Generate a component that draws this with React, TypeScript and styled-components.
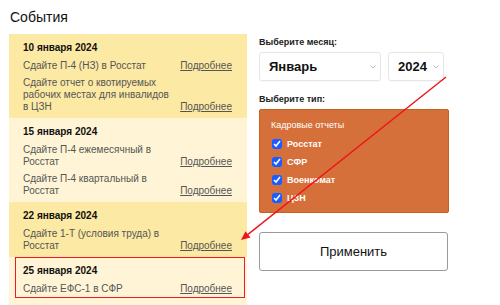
import React from "react";
import styled, { createGlobalStyle } from "styled-components";

const Global = createGlobalStyle`
  html, body { margin: 0; padding: 0; background: #fff; }
  body { font-family: "Liberation Sans", Arial, sans-serif; color: #111; }
  * { box-sizing: border-box; }
`;

const Page = styled.div`
  position: relative;
  width: 500px;
  height: 305px;
  overflow: hidden;
  display: flex;
  gap: 12px;
  padding-left: 9px;
`;

const LeftCol = styled.div`
  width: 238px;
  display: flex;
  flex-direction: column;
`;

const Title = styled.h1`
  margin: 8px 0 8px 1px;
  font-size: 14px;
  line-height: 18px;
  font-weight: 400;
  color: #111;
`;

const Group = styled.section<{ $dark?: boolean; $grow?: boolean }>`
  background: ${(p) => (p.$dark ? "#fce9a3" : "#fff5d6")};
  padding: 7px 15px 5px 14px;
  display: flex;
  flex-direction: column;
  gap: 5px;
  ${(p) => (p.$grow ? "flex: 1;" : "")}
`;

const DateLabel = styled.div`
  font-size: 10px;
  line-height: 14px;
  font-weight: 700;
  color: #111;
`;

const Item = styled.div`
  display: grid;
  grid-template-columns: 152px 1fr;
  font-size: 10px;
  line-height: 12px;
  color: #555;
`;

const Link = styled.a`
  justify-self: end;
  align-self: end;
  color: #555;
  text-decoration: underline;
  cursor: pointer;
`;

const RightCol = styled.div`
  width: 190px;
  padding-top: 36px;
  display: flex;
  flex-direction: column;
`;

const FieldLabel = styled.div<{ $top?: number }>`
  font-size: 9px;
  line-height: 12px;
  font-weight: 700;
  color: #222;
  margin-top: ${(p) => p.$top ?? 0}px;
`;

const SelectRow = styled.div`
  display: flex;
  gap: 7px;
  margin-top: 4px;
`;

const Select = styled.div<{ $w: number }>`
  width: ${(p) => p.$w}px;
  height: 29px;
  background: #fff;
  border: 1px solid #e6e6e6;
  border-radius: 3px;
  box-shadow: 0 1px 1px rgba(0, 0, 0, 0.03);
  display: flex;
  align-items: center;
  justify-content: space-between;
  padding: 0 4px 0 9px;
  font-size: 13px;
  font-weight: 700;
  color: #111;
`;

const Chevron = () => (
  <svg width="6" height="4" viewBox="0 0 6 4">
    <path d="M0.5 0.5 L3 3 L5.5 0.5" fill="none" stroke="#aaa" strokeWidth="0.8" />
  </svg>
);

const TypeBox = styled.div`
  margin-top: 4px;
  height: 104px;
  background: #d6703a;
  border: 1px solid #c8601f;
  border-radius: 2px;
  padding: 9px 11px 0;
  display: flex;
  flex-direction: column;
  color: #fff;
`;

const TypeTitle = styled.div`
  font-size: 9px;
  line-height: 12px;
  margin-bottom: 4px;
  flex-shrink: 0;
`;

const CheckRow = styled.label`
  display: flex;
  align-items: center;
  gap: 5px;
  height: 18px;
  flex-shrink: 0;
  font-size: 9px;
  font-weight: 700;
  color: #fff;
`;

const Check = styled.input`
  width: 10px;
  height: 10px;
  margin: 0 0 0 1px;
  accent-color: #1a5cff;
`;

const Button = styled.button`
  margin-top: 19px;
  height: 39px;
  width: 189px;
  background: #fff;
  border: 1.5px solid #9a9a9a;
  border-radius: 3px;
  font-family: "Liberation Sans", Arial, sans-serif;
  font-size: 13px;
  color: #111;
  cursor: pointer;
`;

const RedBox = styled.div`
  position: absolute;
  left: 15px;
  top: 257px;
  width: 230px;
  height: 41px;
  border: 1.5px solid #ee1c22;
  pointer-events: none;
`;

const ArrowLayer = styled.svg`
  position: absolute;
  left: 0;
  top: 0;
  pointer-events: none;
`;

const events = [
  {
    date: "10 января 2024",
    dark: true,
    items: ["Сдайте П-4 (НЗ) в Росстат", "Сдайте отчет о квотируемых рабочих местах для инвалидов в ЦЗН"],
  },
  {
    date: "15 января 2024",
    dark: false,
    items: ["Сдайте П-4 ежемесячный в Росстат", "Сдайте П-4 квартальный в Росстат"],
  },
  {
    date: "22 января 2024",
    dark: true,
    items: ["Сдайте 1-Т (условия труда) в Росстат"],
  },
  {
    date: "25 января 2024",
    dark: false,
    items: ["Сдайте ЕФС-1 в СФР"],
  },
];

const types = ["Росстат", "СФР", "Военкомат", "ЦЗН"];

export default function App() {
  return (
    <>
      <Global />
      <Page>
        <LeftCol>
          <Title>События</Title>
          {events.map((g, i) => (
            <Group key={g.date} $dark={g.dark} $grow={i === events.length - 1}>
              <DateLabel>{g.date}</DateLabel>
              {g.items.map((t) => (
                <Item key={t}>
                  <span>{t}</span>
                  <Link>Подробнее</Link>
                </Item>
              ))}
            </Group>
          ))}
        </LeftCol>
        <RightCol>
          <FieldLabel>Выберите месяц:</FieldLabel>
          <SelectRow>
            <Select $w={122}>
              <span>Январь</span>
              <Chevron />
            </Select>
            <Select $w={56}>
              <span>2024</span>
              <Chevron />
            </Select>
          </SelectRow>
          <FieldLabel $top={12}>Выберите тип:</FieldLabel>
          <TypeBox>
            <TypeTitle>Кадровые отчеты</TypeTitle>
            {types.map((t) => (
              <CheckRow key={t}>
                <Check type="checkbox" defaultChecked />
                {t}
              </CheckRow>
            ))}
          </TypeBox>
          <Button>Применить</Button>
        </RightCol>
        <RedBox />
        <ArrowLayer width="500" height="305" viewBox="0 0 500 305">
          <line x1="446" y1="77" x2="248" y2="234.4" stroke="#f0141a" strokeWidth="1.4" />
          <polygon points="241,240 250.5,237.5 245.5,231.3" fill="#f0141a" />
        </ArrowLayer>
      </Page>
    </>
  );
}
